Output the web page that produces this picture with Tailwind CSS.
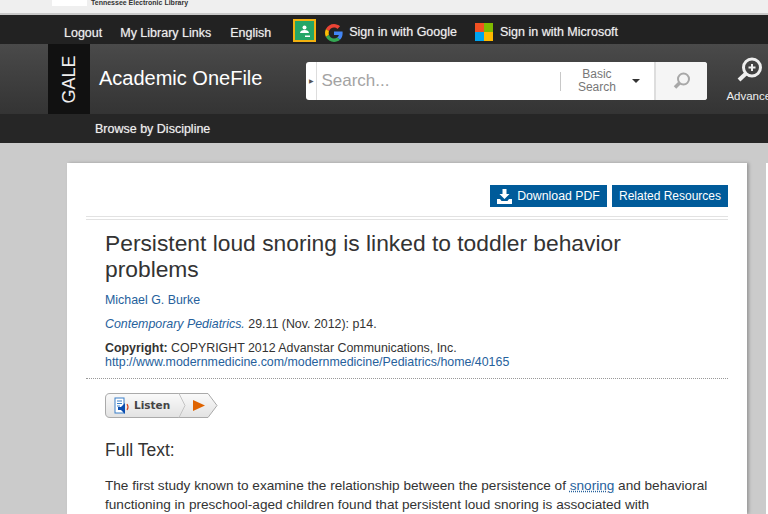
<!DOCTYPE html>
<html lang="en">
<head>
  <meta charset="UTF-8" />
  <title>Academic OneFile</title>
  <script src="https://cdn.jsdelivr.net/npm/@tailwindcss/browser@4"></script>
</head>
<body class="h-[514px] w-[768px] overflow-hidden bg-[#cbcbcb] font-['Liberation_Sans',Arial,sans-serif]">

  <!-- library strip -->
  <div class="h-[13px] bg-[#efefef] pl-[52px] flex overflow-hidden">
    <div class="w-[35px] h-[6px] bg-white"></div>
    <div class="ml-[4px] h-[6px] text-[7px] leading-[6px] font-bold text-[#333] whitespace-nowrap">Tennessee Electronic Library</div>
  </div>
  <div class="h-[2px] bg-[#c9c9c9]"></div>

  <!-- top links -->
  <div class="h-[29px] bg-[#222222] pl-[64px] flex items-center text-[12.5px] text-[#eeeeee] [text-shadow:0_0_1px_#fff8]">
    <a class="mt-[7px]">Logout</a>
    <a class="mt-[7px] ml-[18px]">My Library Links</a>
    <a class="mt-[7px] ml-[19px]">English</a>
    <div class="ml-[22px] mt-[2px] w-[23px] h-[23px] border-2 border-[#f2b110] bg-[#25a667] flex flex-col items-center justify-center">
      <svg width="15" height="15" viewBox="0 0 15 15"><circle cx="7.5" cy="4.5" r="2" fill="#fff"/><path d="M3 10c0-2 2-3 4.5-3S12 8 12 10z" fill="#fff"/><rect x="8" y="12.5" width="5" height="1.5" fill="#fff"/></svg>
    </div>
    <svg class="ml-[9px] mt-[6px]" width="18" height="18" viewBox="0 0 48 48">
      <path fill="#EA4335" d="M24 9.5c3.5 0 6.700 1.200 9.200 3.600l6.900-6.900C35.900 2.400 30.500 0 24 0 14.600 0 6.500 5.400 2.600 13.200l8 6.200C12.500 13.700 17.800 9.500 24 9.500z"/>
      <path fill="#4285F4" d="M47 24.500c0-1.600-.1-3.100-.4-4.500H24v9h13c-.6 3-2.300 5.500-4.800 7.200l7.700 6C44.400 38 47 31.900 47 24.500z"/>
      <path fill="#FBBC05" d="M10.600 28.600c-.5-1.400-.8-3-.8-4.600s.3-3.200.8-4.600l-8-6.200C.9 16.500 0 20.100 0 24s.9 7.500 2.600 10.800z"/>
      <path fill="#34A853" d="M24 48c6.500 0 11.900-2.100 15.900-5.800l-7.700-6c-2.200 1.500-4.900 2.300-8.200 2.300-6.200 0-11.500-4.200-13.400-9.900l-8 6.200C6.500 42.600 14.600 48 24 48z"/>
    </svg>
    <a class="ml-[6px] mt-[5px]">Sign in with Google</a>
    <div class="ml-[18px] mt-[5px] grid grid-cols-2 w-[18px] h-[18px]">
      <span class="bg-[#f25022]"></span><span class="bg-[#7fba00]"></span>
      <span class="bg-[#00a4ef]"></span><span class="bg-[#ffb900]"></span>
    </div>
    <a class="ml-[7px] mt-[5px]">Sign in with Microsoft</a>
  </div>

  <!-- product header -->
  <div class="h-[70px] bg-gradient-to-b from-[#4a4a4a] to-[#343434] flex pl-[48px]">
    <div class="w-[42px] bg-[#111111] flex items-center justify-center">
      <span class="-rotate-90 text-[18px] text-[#eeeeee]">GALE</span>
    </div>
    <div class="ml-[9px] mt-[22px] text-[20px] leading-[24px] text-white whitespace-nowrap">Academic OneFile</div>
    <div class="ml-[44px] mt-[18px] w-[401px] h-[38px] shrink-0 bg-white rounded-[3px] flex items-center">
      <div class="w-[11px] h-full border-r border-[#dddddd] flex items-center justify-center text-[6px] text-[#555]">▶</div>
      <div class="ml-[4px] w-[239px] text-[17px] text-[#a3a3a3]">Search...</div>
      <div class="w-px h-[19px] bg-[#c8c8c8]"></div>
      <div class="w-[71px] text-center text-[12px] leading-[13px] text-[#777777]">Basic<br>Search</div>
      <div class="w-0 h-0 border-x-[4px] border-x-transparent border-t-[4px] border-t-[#333333]"></div>
      <div class="ml-[14px] h-full flex-1 bg-[#f5f5f5] border-l-2 border-[#dddddd] rounded-r-[3px] flex items-center justify-center">
        <svg width="20" height="20" viewBox="0 0 20 20" fill="none" stroke="#a8a8a8"><circle cx="11.500" cy="8" r="5.500" stroke-width="2"/><path d="M7.500 12 3 16.500" stroke-width="3.500"/></svg>
      </div>
    </div>
    <div class="ml-[19px] w-[60px] shrink-0 flex flex-col items-start">
      <svg class="mt-[12px] ml-[10px]" width="28" height="28" viewBox="0 0 28 28" fill="none" stroke="#eeeeee"><circle cx="16" cy="11.500" r="8.500" stroke-width="3"/><path d="M10 17.500 3 24" stroke-width="4"/><path d="M12.500 11.500h7M16 8v7" stroke-width="2"/></svg>
      <span class="text-[11.5px] leading-[13px] mt-[6px] text-[#eeeeee] whitespace-nowrap">Advanced</span>
    </div>
  </div>

  <!-- nav -->
  <div class="h-[29px] bg-[#262626] pl-[95px] pt-[2px] flex items-center text-[12.5px] text-[#eeeeee] [text-shadow:0_0_1px_#fff8]">
    <a>Browse by Discipline</a>
  </div>

  <!-- article -->
  <div class="flex mt-[20px] pl-[67px]">
    <main class="w-[680px] h-[351px] overflow-hidden bg-white px-[19px] pt-[22px] shadow-[2px_0_3px_#999]">
      <div class="flex justify-end gap-[5px]">
        <a class="h-[22px] w-[117px] bg-[#005b9a] text-white text-[12.3px] flex items-center justify-center gap-[5px]">
          <svg width="15" height="15" viewBox="0 0 15 15" fill="#fff"><path d="M5.500 0h4v5h3l-5 5-5-5h3z"/><path d="M0 10h3l1.500 2h6L12 10h3v5H0z"/></svg>
          Download PDF
        </a>
        <a class="h-[22px] w-[116px] bg-[#005b9a] text-white text-[12px] flex items-center justify-center">Related Resources</a>
      </div>
      <div class="mt-[9px] h-[4px] border-y border-[#e2e2e2]"></div>
      <div class="pl-[19px]">
        <h1 class="mt-[10px] w-[560px] text-[22.8px] leading-[26px] text-[#333333]">Persistent loud snoring is linked to toddler behavior problems</h1>
        <p class="mt-[10px] text-[12.4px] leading-[16px] text-[#26619c]">Michael G. Burke</p>
        <p class="mt-[8px] text-[12.4px] leading-[16px] text-[#333333]"><i class="text-[#26619c]">Contemporary Pediatrics.</i> 29.11 (Nov. 2012): p14.</p>
        <p class="mt-[9px] text-[12.4px] leading-[14px] text-[#333333]"><b>Copyright:</b> COPYRIGHT 2012 Advanstar Communications, Inc.<br><a class="text-[#26619c]">http://www.modernmedicine.com/modernmedicine/Pediatrics/home/40165</a></p>
      </div>
      <div class="mt-[9px] border-t border-dotted border-[#999999]"></div>
      <div class="pl-[19px]">
        <div class="mt-[14px] w-[113px] h-[25px] relative">
          <svg class="absolute inset-0" width="113" height="25" viewBox="0 0 113 25">
            <defs><linearGradient id="listenBg" x1="0" y1="0" x2="0" y2="1"><stop offset="0" stop-color="#fafafa"/><stop offset="1" stop-color="#e2e2e2"/></linearGradient></defs>
            <path d="M5 .5H103L112 12.500 103 24.500H5Q.5 24.500 .5 20V5Q.5 .5 5 .5Z" fill="url(#listenBg)" stroke="#aaaaaa"/>
            <path d="M74 .5 80 12.500 74 24.500" fill="none" stroke="#c4c4c4"/>
            <path d="M88 7 100 12.500 88 18Z" fill="#df6300"/>
            <rect x="10" y="5" width="9" height="15" fill="#fff" stroke="#3a7fc8"/>
            <path d="M12 8h5M12 10.500h5M12 13h3" stroke="#3a7fc8"/>
            <path d="M13 14h3l4-4v11l-4-4h-3z" fill="#0b4eb0"/>
            <path d="M22 11q2 3 0 6" fill="none" stroke="#d8431c" stroke-width="1.200"/>
          </svg>
          <span class="absolute left-[29px] top-[5px] text-[10.5px] leading-[14px] font-bold text-[#444444] font-['DejaVu_Sans',sans-serif]">Listen</span>
        </div>
        <h2 class="mt-[22px] text-[17.5px] leading-[20px] text-[#333333]">Full Text:</h2>
        <p class="mt-[16px] w-[610px] text-[13.6px] leading-[19px] text-[#333333]">The first study known to examine the relationship between the persistence of <span class="text-[#26619c] underline decoration-dotted">snoring</span> and behavioral functioning in preschool-aged children found that persistent loud snoring is associated with</p>
      </div>
    </main>
    <div class="ml-[19px] flex-1 h-[351px] bg-white"></div>
  </div>
</body>
</html>
